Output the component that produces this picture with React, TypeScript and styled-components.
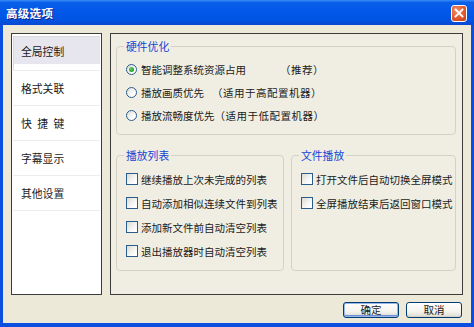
import styled, { createGlobalStyle } from "styled-components";

const GlobalStyle = createGlobalStyle`
  html, body {
    margin: 0;
    padding: 0;
    background: #ffffff;
  }
  body {
    font-family: "Noto Sans CJK SC", "Liberation Sans", sans-serif;
  }
`;

const Window = styled.div`
  width: 474px;
  height: 327px;
  display: flex;
  flex-direction: column;
  background: #0a4fe0;
  box-sizing: border-box;
`;

const TitleBar = styled.div`
  height: 25px;
  flex: none;
  display: flex;
  align-items: center;
  justify-content: space-between;
  padding: 0 7px 0 6px;
  background: linear-gradient(
    #3d8cf6 0%,
    #0a5fe8 10%,
    #0258e8 45%,
    #0054e3 80%,
    #0a47d0 100%
  );
`;

const Title = styled.span`
  color: #ffffff;
  font-size: 11.5px;
  font-weight: 700;
  letter-spacing: 0.3px;
  text-shadow: 1px 1px 0 #0a1e8c;
  margin-top: 1px;
`;

const CloseButton = styled.div`
  width: 16px;
  height: 17px;
  margin-top: 1px;
  box-sizing: border-box;
  border: 1px solid #ffffff;
  border-radius: 3px;
  background: radial-gradient(circle at 35% 30%, #f0906a 0%, #e2582f 55%, #c23c14 100%);
  display: flex;
  align-items: center;
  justify-content: center;
`;

const Body = styled.div`
  flex: 1;
  margin: 0 3px 4px 3px;
  background: #ece9d8;
  display: flex;
  flex-direction: column;
  padding: 8px 8px 5px 8px;
  gap: 7px;
`;

const Panels = styled.div`
  display: flex;
  gap: 8px;
  height: 262px;
`;

const SideList = styled.ul`
  list-style: none;
  margin: 0;
  padding: 2px 1px 0 1px;
  width: 91px;
  box-sizing: border-box;
  background: #ffffff;
  border: 1px solid #3c3c3c;
`;

const SideItem = styled.li<{ $active?: boolean }>`
  height: 35px;
  box-sizing: border-box;
  display: flex;
  align-items: center;
  padding-left: 8px;
  font-size: 10.8px;
  color: #1a1a1a;
  word-spacing: 3px;
  border-bottom: 1px solid #ececec;
  background: ${(p) =>
    p.$active
      ? "linear-gradient(#e7e6ee 0 28px, #ffffff 28px)"
      : "transparent"};
  box-shadow: ${(p) => (p.$active ? "inset 1px 1px 0 #d9d9df" : "none")};
  padding-bottom: ${(p) => (p.$active ? "5px" : "0")};
`;

const Content = styled.div`
  flex: 1;
  box-sizing: border-box;
  background: #f0eee3;
  border: 1px solid #3c3c3c;
  padding: 6px 6px 0 5px;
  display: flex;
  flex-direction: column;
  gap: 14px;
`;

const Group = styled.fieldset`
  margin: 0;
  padding: 6px 8px 7px 9px;
  border: 1px solid #d5d2c4;
  border-radius: 4px;
  display: flex;
  flex-direction: column;
  min-width: 0;
`;

const Legend = styled.legend`
  color: #1544d4;
  font-size: 10.8px;
  padding: 0 2px;
  margin-left: -2px;
  line-height: 12px;
`;

const GroupRow = styled.div`
  display: grid;
  grid-template-columns: 168px 1fr;
  gap: 7px;
  height: 118px;
`;

const OptionRow = styled.label<{ $height: number }>`
  display: flex;
  align-items: center;
  height: ${(p) => p.$height}px;
  font-size: 10.5px;
  color: #1a1a1a;
  white-space: nowrap;
`;

const RadioDot = styled.span<{ $checked?: boolean }>`
  width: 11px;
  height: 11px;
  flex: none;
  box-sizing: border-box;
  border-radius: 50%;
  border: 1px solid #2a5c8c;
  background: linear-gradient(135deg, #dcdcd4 0%, #ffffff 70%);
  margin-right: 4px;
  display: flex;
  align-items: center;
  justify-content: center;

  &::after {
    content: "";
    display: ${(p) => (p.$checked ? "block" : "none")};
    width: 5px;
    height: 5px;
    border-radius: 50%;
    background: radial-gradient(circle at 35% 35%, #66d066 0%, #21a121 70%);
  }
`;

const CheckBox = styled.span`
  width: 12px;
  height: 12px;
  flex: none;
  box-sizing: border-box;
  border: 1px solid #2a5c8c;
  background: linear-gradient(135deg, #dcdcd4 0%, #ffffff 80%);
  margin-right: 3px;
`;

const OptionText = styled.span<{ $width?: number }>`
  display: inline-block;
  min-width: ${(p) => (p.$width ? `${p.$width}px` : "0")};
`;

const Note = styled.span`
  letter-spacing: 0.5px;
`;

const Footer = styled.div`
  display: flex;
  justify-content: flex-end;
  gap: 7px;
  padding-right: 1px;
`;

const Button = styled.button<{ $default?: boolean }>`
  width: 56px;
  height: 16px;
  padding: 0;
  font-family: inherit;
  font-size: 10.5px;
  line-height: 12px;
  color: #1a1a1a;
  border: 1px solid #003c74;
  border-radius: 3px;
  background: linear-gradient(#ffffff 0%, #f4f3ee 60%, #dcdad0 100%);
  box-shadow: ${(p) =>
    p.$default
      ? "inset 0 0 0 1px #98b8ea, inset 0 -1px 0 1px #6e8fd8"
      : "inset 0 -1px 0 #d6d0c5"};
`;

const sideItems = ["全局控制", "格式关联", "快 捷 键", "字幕显示", "其他设置"];

const radios = [
  { text: "智能调整系统资源占用", note: "（推荐）", width: 139, checked: true },
  { text: "播放画质优先", note: "（适用于高配置机器）", width: 71 },
  { text: "播放流畅度优先", note: "（适用于低配置机器）", width: 71 },
];

const playlist = [
  "继续播放上次未完成的列表",
  "自动添加相似连续文件到列表",
  "添加新文件前自动清空列表",
  "退出播放器时自动清空列表",
];

const filePlay = ["打开文件后自动切换全屏模式", "全屏播放结束后返回窗口模式"];

export default function App() {
  return (
    <>
      <GlobalStyle />
      <Window>
        <TitleBar>
          <Title>高级选项</Title>
          <CloseButton>
            <svg width="10" height="10" viewBox="0 0 10 10">
              <path
                d="M1.5 1.5 L8.5 8.5 M8.5 1.5 L1.5 8.5"
                stroke="#ffffff"
                strokeWidth="1.8"
                strokeLinecap="square"
              />
            </svg>
          </CloseButton>
        </TitleBar>
        <Body>
          <Panels>
            <SideList>
              {sideItems.map((item, index) => (
                <SideItem key={item} $active={index === 0}>
                  {item}
                </SideItem>
              ))}
            </SideList>
            <Content>
              <Group>
                <Legend>硬件优化</Legend>
                {radios.map((radio) => (
                  <OptionRow key={radio.text} $height={23}>
                    <RadioDot $checked={radio.checked} />
                    <OptionText $width={radio.width}>{radio.text}</OptionText>
                    <Note>{radio.note}</Note>
                  </OptionRow>
                ))}
              </Group>
              <GroupRow>
                <Group>
                  <Legend>播放列表</Legend>
                  {playlist.map((item) => (
                    <OptionRow key={item} $height={24}>
                      <CheckBox />
                      <OptionText>{item}</OptionText>
                    </OptionRow>
                  ))}
                </Group>
                <Group>
                  <Legend>文件播放</Legend>
                  {filePlay.map((item) => (
                    <OptionRow key={item} $height={24}>
                      <CheckBox />
                      <OptionText>{item}</OptionText>
                    </OptionRow>
                  ))}
                </Group>
              </GroupRow>
            </Content>
          </Panels>
          <Footer>
            <Button $default>确定</Button>
            <Button>取消</Button>
          </Footer>
        </Body>
      </Window>
    </>
  );
}
